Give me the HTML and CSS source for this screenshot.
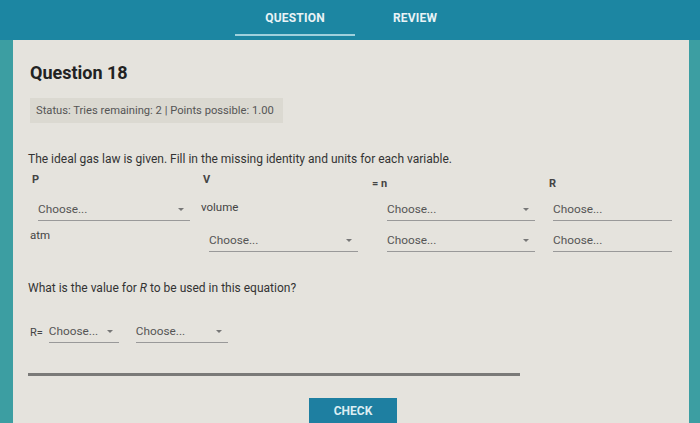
FILE: index.html
```html
<!DOCTYPE html>
<html>
<head>
<meta charset="utf-8">
<link rel="stylesheet" href="styles.css">
</head>
<body>
<header class="topbar">
  <nav class="tabs">
    <div class="tab active">QUESTION</div>
    <div class="tab">REVIEW</div>
  </nav>
</header>
<main class="card">
  <h1 class="title">Question 18</h1>
  <div class="status">Status: Tries remaining: 2 | Points possible: 1.00</div>
  <p class="prompt">The ideal gas law is given. Fill in the missing identity and units for each variable.</p>
  <div class="vars">
    <div class="head h1">P</div>
    <div class="head h2">V</div>
    <div class="head h3">= n</div>
    <div class="head h4">R</div>

    <div class="cell c1"><div class="select w152">Choose...<span class="arrow"></span></div></div>
    <div class="cell c2"><span class="plain">volume</span></div>
    <div class="cell c3"><div class="select w148">Choose...<span class="arrow"></span></div></div>
    <div class="cell c4"><div class="select w119 noarrow">Choose...</div></div>

    <div class="cell c1 top"><span class="plain atm">atm</span></div>
    <div class="cell c2"><div class="select w149 shift">Choose...<span class="arrow"></span></div></div>
    <div class="cell c3"><div class="select w148">Choose...<span class="arrow"></span></div></div>
    <div class="cell c4"><div class="select w119 noarrow">Choose...</div></div>
  </div>
  <p class="prompt q2">What is the value for <i>R</i> to be used in this equation?</p>
  <div class="rrow">
    <span class="req">R=</span>
    <div class="select w70">Choose...<span class="arrow"></span></div>
    <div class="select w92 gap">Choose...<span class="arrow"></span></div>
  </div>
  <div class="rule"></div>
  <div class="actions"><button class="check">CHECK</button></div>
</main>
</body>
</html>
```
FILE: styles.css
```css
html, body {
  margin: 0;
  padding: 0;
  height: 423px;
  overflow: hidden;
}
body {
  background: #3c9ea2;
  font-family: Roboto, "Liberation Sans", sans-serif;
  color: #3a3a3a;
}
.topbar {
  height: 40px;
  background: #1c86a2;
}
.tabs {
  display: flex;
  margin-left: 235px;
  height: 40px;
}
.tab {
  width: 120px;
  text-align: center;
  color: #e9f3f6;
  font-size: 12px;
  font-weight: 700;
  padding-top: 11px;
  box-sizing: border-box;
  letter-spacing: 0.2px;
}
.tab.active {
  border-bottom: 2px solid #9fd0dc;
  height: 36px;
}
.card {
  margin: 0 11px 0 13px;
  background: #e5e3dd;
  height: 383px;
  padding: 1px 0 0 17px;
  box-sizing: border-box;
}
.title {
  font-size: 18px;
  font-weight: 700;
  margin: 21px 0 0 0;
  color: #222;
}
.status {
  display: inline-block;
  margin-top: 15px;
  background: #dbd9d1;
  font-size: 11.2px;
  color: #555;
  padding: 6px 9px 6px 6px;
}
.prompt {
  margin: 29px 0 0 -2px;
  font-size: 12px;
  color: #333;
}
.vars {
  display: grid;
  grid-template-columns: 171px 169px 177px 130px;
  grid-template-rows: 20px 31px 31px;
  margin-top: 4px;
}
.head {
  font-size: 11px;
  font-weight: 700;
  color: #444;
  padding-left: 2px;
  padding-top: 3px;
}
.h3, .h4 { padding-top: 7px; }
.cell {
  display: flex;
  align-items: flex-end;
}
.cell.top { align-items: flex-start; }
.select {
  position: relative;
  font-size: 11.8px;
  color: #555;
  border-bottom: 1px solid #999;
  height: 20px;
  line-height: 16px;
  box-sizing: border-box;
}
.arrow {
  position: absolute;
  right: 6px;
  top: 7px;
  width: 0;
  height: 0;
  border-left: 3px solid transparent;
  border-right: 3px solid transparent;
  border-top: 3px solid #777;
}
.c1 .select { margin-left: 8px; }
.c3 .select { margin-left: 17px; }
.c4 .select { margin-left: 6px; }
.shift { margin-left: 8px; }
.w152 { width: 152px; }
.w148 { width: 148px; }
.w149 { width: 149px; }
.w119 { width: 119px; }
.w70 { width: 70px; }
.w92 { width: 92px; }
.plain {
  font-size: 11.5px;
  color: #444;
  margin-bottom: 7px;
}
.atm { margin: 7px 0 0 0; }
.q2 { margin-top: 29px; font-size: 12px; }
.rrow {
  display: flex;
  align-items: flex-end;
  margin-top: 28px;
}
.req {
  font-size: 11px;
  color: #444;
  margin-right: 6px;
  margin-bottom: 4px;
}
.gap { margin-left: 17px; }
.rule {
  width: 492px;
  height: 3px;
  background: #7a7a78;
  margin: 30px 0 0 -2px;
}
.actions {
  display: flex;
  margin-left: 279px;
  margin-top: 22px;
}
.check {
  width: 88px;
  height: 30px;
  background: #1e7fa1;
  color: #dceef3;
  border: none;
  font-family: Roboto, "Liberation Sans", sans-serif;
  font-size: 12px;
  font-weight: 700;
  padding: 0 0 5px 0;
}
```
